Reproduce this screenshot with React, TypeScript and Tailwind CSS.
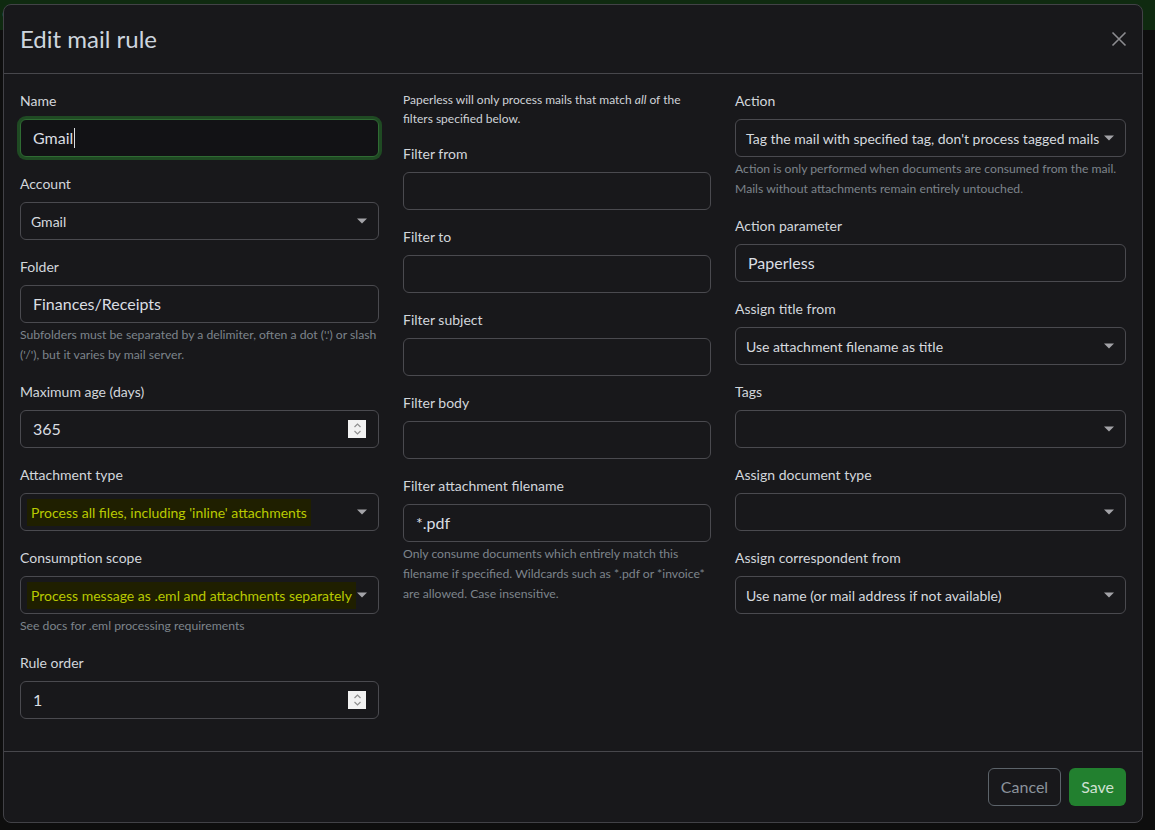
import type { ReactNode } from "react"

const font = { fontFamily: "Lato, 'Noto Sans', sans-serif" }

function Caret() {
  return (
    <svg width="10" height="6" viewBox="0 0 10 6" className="absolute right-[11px] top-1/2 -translate-y-1/2">
      <path d="M0 0.5h10L5 5.5z" fill="#a3a3a8" />
    </svg>
  )
}

function Spinner() {
  return (
    <div className="absolute right-[12px] top-1/2 flex h-[18px] w-[18px] -translate-y-1/2 flex-col items-center justify-center bg-[#f1f1f1]">
      <svg width="9" height="14" viewBox="0 0 9 14">
        <path d="M1.5 5L4.5 2l3 3M1.5 9l3 3 3-3" fill="none" stroke="#8f8f8f" strokeWidth="1.2" />
      </svg>
    </div>
  )
}

function Label({ children }: { children: ReactNode }) {
  return <div className="mb-2 text-[14px] leading-[21px] text-[#d2d6db]">{children}</div>
}

function Help({ children }: { children: ReactNode }) {
  return <div className="mt-[2px] text-[12.2px] leading-[20px] text-[#7d848b]">{children}</div>
}

function Input({ value, focus, number }: { value?: string; focus?: boolean; number?: boolean }) {
  return (
    <div
      className={`relative flex h-[38px] items-center rounded-md border px-3 text-[16px] text-[#dadee3] ${
        focus ? "border-[#2f6b33] bg-[#121215] shadow-[0_0_0_3px_#1f4a23]" : "border-[#4a4a4f] bg-[#18181b]"
      }`}
    >
      <span>{value}</span>
      {focus && <span className="ml-[1px] h-[20px] w-px bg-[#dadee3]" />}
      {number && <Spinner />}
    </div>
  )
}

function Select({ value, mark }: { value?: string; mark?: boolean }) {
  return (
    <div className="relative flex h-[38px] items-center rounded-md border border-[#4a4a4f] bg-[#18181b] pl-[10px] pr-8 text-[14px] text-[#d6dadf]">
      {mark ? (
        <span className="-ml-1 whitespace-nowrap bg-[#1f1f00] px-1 py-[3px] text-[#b9c900]">{value}</span>
      ) : (
        <span className="whitespace-nowrap">{value}</span>
      )}
      <Caret />
    </div>
  )
}

function Field({ label, help, children }: { label: string; help?: ReactNode; children: ReactNode }) {
  return (
    <div className="mb-4">
      <Label>{label}</Label>
      {children}
      {help && <Help>{help}</Help>}
    </div>
  )
}

export default function App() {
  return (
    <div className="relative min-h-[830px] bg-[#0e0e0e]" style={font}>
      <div className="absolute inset-x-0 top-0 h-[30px] bg-[#0f2a10]">
        <span className="ml-[2px] text-[14px] leading-[10px] text-[#3c5a3c]">earch documents</span>
      </div>
      <div className="relative pl-[3px] pt-1">
        <div className="w-[1140px] rounded-lg border border-[#424247] bg-[#18181b]">
          <div className="flex h-[69px] items-center justify-between border-b border-[#47474c] px-4">
            <h1 className="text-[24px] text-[#cdd5de]">Edit mail rule</h1>
            <svg width="16" height="16" viewBox="0 0 16 16" className="mr-[-1px]">
              <path d="M1.5 1.5l13 13M14.5 1.5l-13 13" stroke="#8c8c90" strokeWidth="1.6" />
            </svg>
          </div>

          <div className="grid grid-cols-[359px_308px_391px] gap-x-6 px-4 pb-4 pt-4">
            <div>
              <Field label="Name">
                <Input value="Gmail" focus />
              </Field>
              <Field label="Account">
                <Select value="Gmail" />
              </Field>
              <Field
                label="Folder"
                help={
                  <>
                    Subfolders must be separated by a delimiter, often a dot ('.') or slash
                    <br />
                    ('/'), but it varies by mail server.
                  </>
                }
              >
                <Input value="Finances/Receipts" />
              </Field>
              <Field label="Maximum age (days)">
                <Input value="365" number />
              </Field>
              <Field label="Attachment type">
                <Select value="Process all files, including 'inline' attachments" mark />
              </Field>
              <Field label="Consumption scope" help="See docs for .eml processing requirements">
                <Select value="Process message as .eml and attachments separately" mark />
              </Field>
              <Field label="Rule order">
                <Input value="1" number />
              </Field>
            </div>

            <div>
              <p className="mb-[15px] text-[12px] leading-[19px] text-[#cfd3d8]">
                Paperless will only process mails that match <em>all</em> of the
                <br />
                filters specified below.
              </p>
              <Field label="Filter from">
                <Input />
              </Field>
              <Field label="Filter to">
                <Input />
              </Field>
              <Field label="Filter subject">
                <Input />
              </Field>
              <Field label="Filter body">
                <Input />
              </Field>
              <Field
                label="Filter attachment filename"
                help={
                  <>
                    Only consume documents which entirely match this
                    <br />
                    filename if specified. Wildcards such as *.pdf or *invoice*
                    <br />
                    are allowed. Case insensitive.
                  </>
                }
              >
                <Input value="*.pdf" />
              </Field>
            </div>

            <div>
              <Field
                label="Action"
                help={
                  <>
                    Action is only performed when documents are consumed from the mail.
                    <br />
                    Mails without attachments remain entirely untouched.
                  </>
                }
              >
                <Select value="Tag the mail with specified tag, don't process tagged mails" />
              </Field>
              <Field label="Action parameter">
                <Input value="Paperless" />
              </Field>
              <Field label="Assign title from">
                <Select value="Use attachment filename as title" />
              </Field>
              <Field label="Tags">
                <Select />
              </Field>
              <Field label="Assign document type">
                <Select />
              </Field>
              <Field label="Assign correspondent from">
                <Select value="Use name (or mail address if not available)" />
              </Field>
            </div>
          </div>

          <div className="flex h-[71px] items-center justify-end gap-2 border-t border-[#47474c] px-4">
            <button className="h-[38px] rounded-md border border-[#5c636a] px-3 text-[16px] text-[#8b939b]">
              Cancel
            </button>
            <button className="h-[38px] rounded-md bg-[#22802f] px-3 text-[16px] text-[#cfe0d2]">
              Save
            </button>
          </div>
        </div>
      </div>
    </div>
  )
}
